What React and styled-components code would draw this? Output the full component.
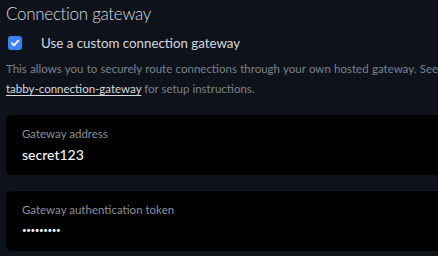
import React from 'react';
import styled, { createGlobalStyle } from 'styled-components';

const GlobalStyle = createGlobalStyle`
  html, body {
    margin: 0;
    padding: 0;
    background: #0e131b;
    overflow: hidden;
  }
  body {
    font-family: 'Lato', 'Noto Sans', sans-serif;
  }
`;

const Page = styled.div`
  width: 438px;
  height: 256px;
  padding: 0 0 0 6px;
  box-sizing: border-box;
  overflow: hidden;
`;

const Title = styled.h3`
  margin: 0;
  padding-top: 1px;
  font-size: 17px;
  line-height: 26px;
  font-weight: 300;
  letter-spacing: -0.3px;
  color: #d5d9df;
`;

const CheckRow = styled.label`
  display: flex;
  align-items: center;
  height: 18px;
  margin-top: 7px;
  padding-left: 2px;
`;

const Box = styled.span`
  width: 14px;
  height: 14px;
  border-radius: 3px;
  background: #3b82f6;
  display: flex;
  align-items: center;
  justify-content: center;
`;

const CheckText = styled.span`
  margin-left: 19px;
  font-size: 13.3px;
  color: #d5d9df;
`;

const Description = styled.div`
  margin: 7px 0 0;
  font-size: 11.5px;
  line-height: 20px;
  color: #7b828c;
  white-space: nowrap;
`;

const Line = styled.div`
  word-spacing: ${(p) => (p.$wide ? '0.35px' : '0')};
`;

const Link = styled.a`
  color: #d5d9df;
  text-decoration: underline;
  text-underline-offset: 2px;
`;

const Field = styled.div`
  margin-top: ${(p) => p.$top}px;
  width: 460px;
  height: 60px;
  box-sizing: border-box;
  background: #000;
  border-radius: 5px;
  padding: 11px 16px 0;
`;

const FieldLabel = styled.div`
  font-size: 11.5px;
  line-height: 16px;
  color: #8a9099;
`;

const FieldValue = styled.div`
  margin-top: 4px;
  font-size: 14px;
  line-height: 18px;
  font-weight: 500;
  color: #f2f4f7;
`;

const Dots = styled.div`
  margin-top: 4px;
  font-size: 8px;
  line-height: 16px;
  letter-spacing: -0.4px;
  color: #f2f4f7;
`;

export default function App() {
  return (
    <Page>
      <GlobalStyle />
      <Title>Connection gateway</Title>
      <CheckRow>
        <Box>
          <svg width="10" height="10" viewBox="0 0 10 10">
            <path d="M1.8 5.2 L4 7.4 L8.3 2.6" fill="none" stroke="#fff" strokeWidth="1.8" strokeLinecap="round" strokeLinejoin="round" />
          </svg>
        </Box>
        <CheckText>Use a custom connection gateway</CheckText>
      </CheckRow>
      <Description>
        <Line $wide>This allows you to securely route connections through your own hosted gateway. See</Line>
        <Line>
          <Link>tabby-connection-gateway</Link> for setup instructions.
        </Line>
      </Description>
      <Field $top={16}>
        <FieldLabel>Gateway address</FieldLabel>
        <FieldValue>secret123</FieldValue>
      </Field>
      <Field $top={16}>
        <FieldLabel>Gateway authentication token</FieldLabel>
        <Dots>•••••••••</Dots>
      </Field>
    </Page>
  );
}
